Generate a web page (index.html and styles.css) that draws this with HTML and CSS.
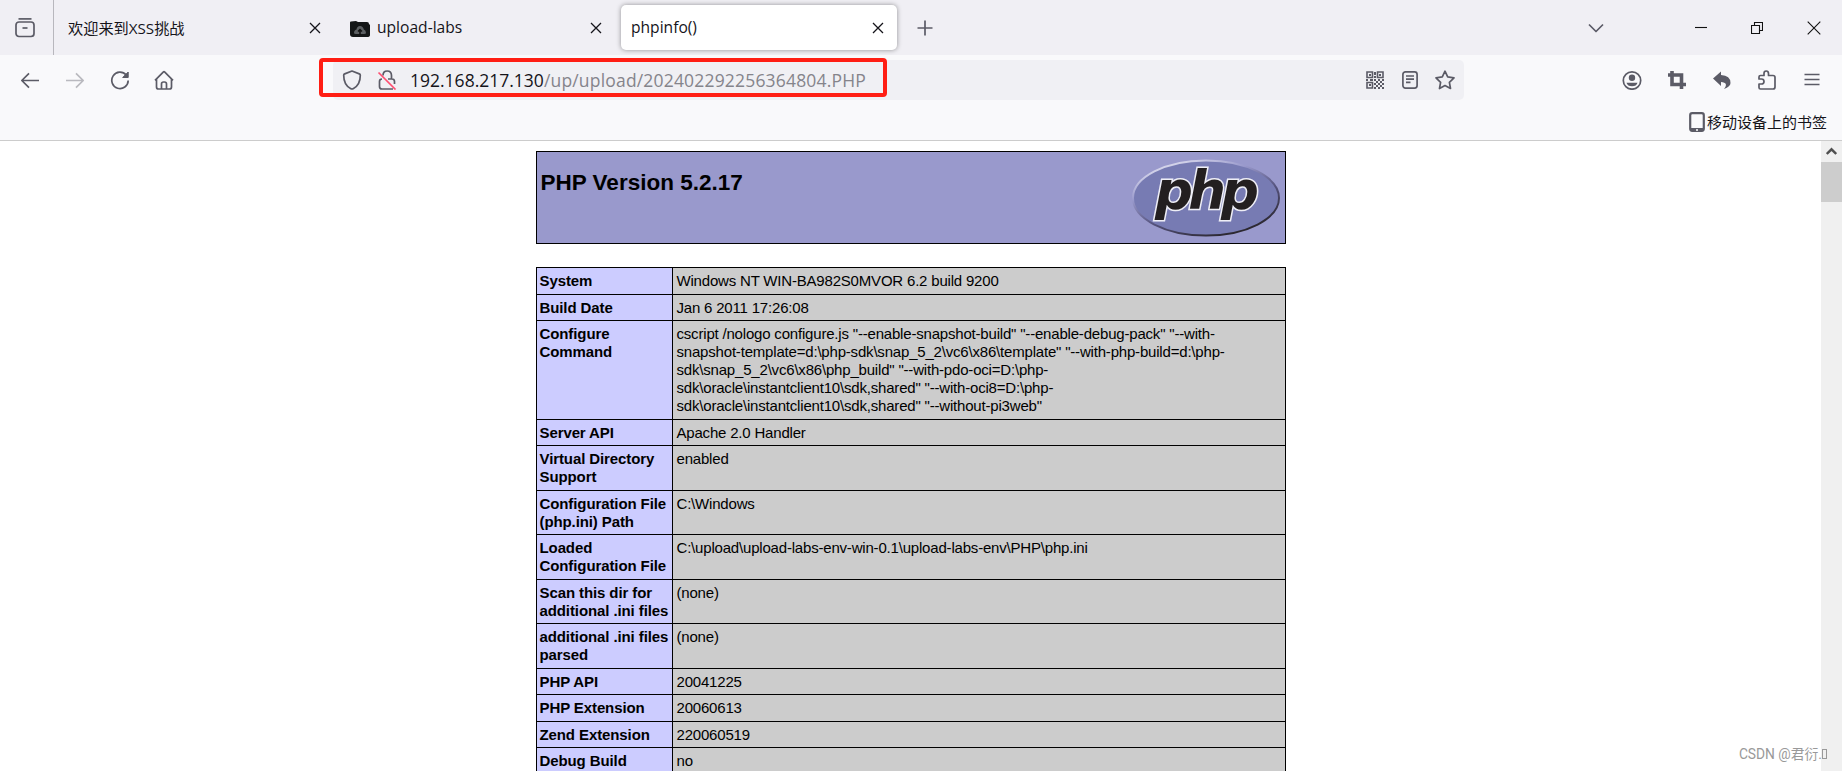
FILE: index.html
```
<!DOCTYPE html>
<html lang="zh">
    <head>
        <meta charset="utf-8">
        <title>phpinfo()</title>
        <link rel="stylesheet" href="styles.css">
    </head>
    <body>
        <div class="tabbar">
            <div class="recent">
                <svg class="icon" width="22" height="22" viewBox="0 0 22 22"><path d="M4.500 1.900h13"/><rect x="2" y="5" width="18" height="14.500" rx="3"/><path d="M8.500 11h5"/></svg>
            </div>
            <div class="tab">
                <span class="tab-title cjk">欢迎来到XSS挑战</span>
                <svg class="close" width="12" height="12" viewBox="0 0 12 12"><path d="M1 1l10 10M11 1L1 11"/></svg>
            </div>
            <div class="tab tab-labs">
                <svg class="favicon" width="20" height="18" viewBox="0 0 20 18"><path d="M0 5V2.500Q0 1.500 1 1.500L6 1l2 1h9q2 0 2 2l1 1v10q0 2-3 2H3q-3 0-3-3z" fill="#141617"/><path d="M4 13q0-3 2.500-3.500Q7 6 10 6t3.800 3.500Q16 10 16 13q0 1-2 1H6q-2 0-2-1z" fill="#5c5f62"/><path d="M10 10v5M8 11.500l2-2 2 2" stroke="#111" stroke-width="1.500" fill="none"/></svg>
                <span class="tab-title">upload-labs</span>
                <svg class="close" width="12" height="12" viewBox="0 0 12 12"><path d="M1 1l10 10M11 1L1 11"/></svg>
            </div>
            <div class="tab active">
                <span class="tab-title">phpinfo()</span>
                <svg class="close" width="12" height="12" viewBox="0 0 12 12"><path d="M1 1l10 10M11 1L1 11"/></svg>
            </div>
            <svg class="icon newtab" width="16" height="16" viewBox="0 0 16 16"><path d="M8 .5v15M.5 8h15"/></svg>
            <div class="window-buttons">
                <svg class="icon" width="16" height="10" viewBox="0 0 16 10"><path d="M1 1.500l7 7 7-7"/></svg>
                <svg class="win min" width="12" height="12" viewBox="0 0 12 12"><path d="M0 5.500h12"/></svg>
                <svg class="win" width="12" height="12" viewBox="0 0 12 12"><path d="M.5 3.500h8v8h-8zM3.500 3.500v-3h8v8h-3"/></svg>
                <svg class="win" width="14" height="14" viewBox="0 0 14 14"><path d="M.7 .7l12.600 12.600M13.300 .7L.7 13.300"/></svg>
            </div>
        </div>
        <div class="toolbar">
            <div class="nav">
                <svg class="icon" width="20" height="20" viewBox="0 0 20 20"><path d="M19 10.500H2M9 3.300L1.800 10.500 9 17.700"/></svg>
                <svg class="icon disabled" width="20" height="20" viewBox="0 0 20 20"><path d="M1 10.500h17M11 3.300l7.200 7.200-7.200 7.200"/></svg>
                <svg class="icon" width="20" height="20" viewBox="0 0 20 20"><path d="M16.200 5A8.200 8.200 0 1 0 18.200 10.500"/><path class="solid" d="M18.200 2v5.500h-5.500z"/></svg>
                <svg class="icon home" width="20" height="20" viewBox="0 0 20 20"><path d="M1 10.300L9.200 2.100q.8-.8 1.600 0L19 10.300M2.500 9V17q0 2 2 2h11q2 0 2-2V9M7.500 19v-5q0-2 2-2h1q2 0 2 2v5"/></svg>
            </div>
            <div class="urlbar">
                <svg class="icon" width="20" height="20" viewBox="0 0 20 20"><path d="M10 1l7.300 2.900q1 .4 1 1.400 0 9.500-6.800 13.300-1.500.8-3 0Q1.700 14.800 1.700 5.300q0-1 1-1.400z"/></svg>
                <svg class="icon lock" width="20" height="20" viewBox="0 0 20 20"><path d="M6 5.500Q6 1 10.200 1t4.300 4.500V9M11 9h4q2.500 0 2.500 2.500V14M5 9q-2.500 0-2.500 2.500v5Q2.500 19 5 19h11"/><path class="slash" d="M1.500 2.500l17 17"/></svg>
                <span class="url">192.168.217.130<span class="path">/up/upload/202402292256364804.PHP</span></span>
                <div class="url-actions">
                    <svg class="qr" width="18" height="18" viewBox="0 0 18 18"><path d="M1 1h5.500v5.500H1zM11.500 1H17v5.500h-5.500zM1 11.500h5.500V17H1z"/><path class="dots" d="M3 3h2v2H3zM13 3h2v2h-2zM3 13h2v2H3zM8 1h2v3H8zM8 5h2v2H8zM0 8h2v2H0zM4 8h3v2H4zM8 8h2v2H8zM12 8h2v2h-2zM16 8h2v2h-2zM10 10h2v2h-2zM14 10h2v2h-2zM8 12h2v2H8zM12 12h2v2h-2zM16 12h2v2h-2zM10 14h2v2h-2zM14 14h2v2h-2zM8 16h2v2H8zM12 16h2v2h-2zM16 16h2v2h-2z"/></svg>
                    <svg class="icon" width="18" height="20" viewBox="0 0 18 20"><rect x="1.900" y="1.900" width="14.200" height="16.200" rx="2.500"/><path d="M5 6h8M5 9.200h8M5 12.400h4.500"/></svg>
                    <svg class="icon" width="20" height="20" viewBox="0 0 20 20"><path d="M10 1.200l2.700 5.700 6.300.9-4.600 4.500 1.100 6.200-5.500-3-5.500 3 1.100-6.200L1 7.800l6.300-.9z"/></svg>
                </div>
                <div class="highlight"></div>
            </div>
            <div class="extensions">
                <svg class="icon" width="20" height="20" viewBox="0 0 20 20"><circle cx="10" cy="10.500" r="8.700"/><circle class="fill" cx="10" cy="7.800" r="3.200"/><path class="fill" d="M4.500 12.800h11q-1 3.500-5.500 3.500t-5.500-3.500z"/></svg>
                <svg class="icon" width="20" height="20" viewBox="0 0 20 20"><path class="thick" d="M5 1v13.500h14M1 5h13.500v14"/></svg>
                <svg class="icon" width="20" height="20" viewBox="0 0 20 20"><path class="fill" d="M9 1.500V5q9.500.5 9.500 8 0 3.500-6.500 6 5-6.500-3-7v4L1 8.500z"/></svg>
                <svg class="icon" width="20" height="20" viewBox="0 0 20 20"><path d="M2 9V7q0-1.500 1.500-1.500H7V3.500Q7 1 9.200 1t2.300 2.500v2H16q2 0 2 2V17q0 2-2 2H3.500Q2 19 2 17.500V14h2.500q2.500 0 2.500-2.500T4.500 9z"/></svg>
                <svg class="icon menu" width="16" height="14" viewBox="0 0 16 14"><path d="M.5 1.500h15M.5 6.500h15M.5 11.500h15"/></svg>
            </div>
        </div>
        <div class="bookmarks">
            <svg width="16" height="20" viewBox="0 0 16 20"><rect x="1.200" y="1.200" width="13.600" height="17.600" rx="2" fill="none" stroke="#5b5b66" stroke-width="2.200"/><path d="M1 16h14v3H1z" fill="#5b5b66"/><circle cx="8" cy="18" r="1" fill="#fff"/></svg>
            <span>移动设备上的书签</span>
        </div>
        <div class="page">
            <div class="content">
                <div class="header">
                    <h1>PHP Version 5.2.17</h1>
                    <svg class="logo" width="150" height="84" viewBox="0 0 150 84">
                        <defs>
                            <linearGradient id="rim" x1=".2" y1="0" x2=".8" y2="1">
                                <stop offset="0" stop-color="#e4e4f2"/>
                                <stop offset=".3" stop-color="#9999cc"/>
                                <stop offset=".6" stop-color="#54527c"/>
                                <stop offset="1" stop-color="#231f20"/>
                            </linearGradient>
                        </defs>
                        <ellipse cx="75" cy="42" rx="73" ry="37.500" fill="#777bb3" stroke="url(#rim)" stroke-width="2"/>
                        <text x="24" y="53" textLength="104">php</text>
                    </svg>
                </div>
                <table class="info">
                    <tr><th>System</th><td>Windows NT WIN-BA982S0MVOR 6.2 build 9200</td></tr>
                    <tr><th>Build Date</th><td>Jan 6 2011 17:26:08</td></tr>
                    <tr><th>Configure Command</th><td>cscript /nologo configure.js "--enable-snapshot-build" "--enable-debug-pack" "--with-<br>snapshot-template=d:\php-sdk\snap_5_2\vc6\x86\template" "--with-php-build=d:\php-<br>sdk\snap_5_2\vc6\x86\php_build" "--with-pdo-oci=D:\php-<br>sdk\oracle\instantclient10\sdk,shared" "--with-oci8=D:\php-<br>sdk\oracle\instantclient10\sdk,shared" "--without-pi3web"</td></tr>
                    <tr><th>Server API</th><td>Apache 2.0 Handler</td></tr>
                    <tr><th>Virtual Directory Support</th><td>enabled</td></tr>
                    <tr><th>Configuration File (php.ini) Path</th><td>C:\Windows</td></tr>
                    <tr><th>Loaded Configuration File</th><td>C:\upload\upload-labs-env-win-0.1\upload-labs-env\PHP\php.ini</td></tr>
                    <tr><th>Scan this dir for additional .ini files</th><td>(none)</td></tr>
                    <tr><th>additional .ini files parsed</th><td>(none)</td></tr>
                    <tr><th>PHP API</th><td>20041225</td></tr>
                    <tr><th>PHP Extension</th><td>20060613</td></tr>
                    <tr><th>Zend Extension</th><td>220060519</td></tr>
                    <tr><th>Debug Build</th><td>no</td></tr>
                </table>
            </div>
            <div class="scrollbar">
                <svg width="11" height="8" viewBox="0 0 11 8"><path d="M.8 7l4.700-4.700L10.200 7"/></svg>
                <div class="thumb"></div>
            </div>
        </div>
        <div class="watermark">CSDN @君衍.<span class="box"></span></div>
    </body>
</html>
```
FILE: styles.css
```
*{
    box-sizing: border-box;
}
body{
    margin: 0;
    height: 771px;
    overflow: hidden;
    display: flex;
    flex-direction: column;
    background-color: #fff;
    font-family: "Open Sans", "Noto Sans CJK SC", sans-serif;
    color: #15141a;
}
svg{
    display: block;
    flex-shrink: 0;
}
.icon{
    fill: none;
    stroke: #5b5b66;
    stroke-width: 1.7;
    stroke-linejoin: round;
}
.icon .fill{fill: #5b5b66; stroke: none;}
.icon .solid{fill: #5b5b66; stroke-width: 1;}
.icon .thick{stroke-width: 3.6; stroke-linejoin: miter;}
.disabled{opacity: 0.4;}

/* tabs */
.tabbar{
    height: 55px;
    flex-shrink: 0;
    display: flex;
    align-items: center;
    background-color: #f0eff4;
}
.recent{
    width: 54px;
    height: 55px;
    padding: 17px 0 0 14px;
    border-right: 1px solid #b8b7bd;
}
.tab{
    width: 281px;
    height: 45px;
    padding: 0 14px;
    display: flex;
    align-items: center;
}
.tab-title{
    margin-bottom: 1px;
    font-size: 15.6px;
}
.cjk{font-size: 15.2px;}
.close{
    margin-left: auto;
    fill: none;
    stroke: #15141a;
    stroke-width: 1.3;
}
.tab-labs{padding-left: 15px;}
.favicon{
    margin: 3px 7px 0 0;
}
.active{
    width: 276px;
    margin-left: 5px;
    padding: 0 13px 0 10px;
    background-color: #fff;
    border-radius: 5px;
    box-shadow: 0 0 5px rgba(0,0,0,0.4);
}
.newtab{
    margin-left: 20px;
}
.window-buttons{
    margin-left: auto;
    padding-right: 21px;
    display: flex;
    align-items: center;
}
.win{
    margin-left: 44px;
    fill: none;
    stroke: #111;
    stroke-width: 1.1;
}
.min{margin-left: 91px;}

/* toolbar */
.toolbar{
    height: 50px;
    flex-shrink: 0;
    padding-top: 5px;
    display: flex;
    background-color: #f9f9fb;
}
.nav{
    width: 333px;
    padding: 10px 0 0 20px;
    display: flex;
    gap: 25px;
}
.home{margin-left: -1px;}
.urlbar{
    position: relative;
    width: 1131px;
    height: 40px;
    padding: 0 9px;
    display: flex;
    align-items: center;
    border-radius: 5px;
    background-color: #f0f0f4;
}
.lock{margin-left: 15px;}
.slash{stroke: #ff4f70;}
.url{
    margin-left: 13px;
    font-size: 17.5px;
    white-space: nowrap;
}
.path{
    letter-spacing: 0.18px;
    color: #85848b;
}
.url-actions{
    margin-left: auto;
    display: flex;
    align-items: center;
    gap: 16.5px;
}
.qr{fill: none; stroke: #5b5b66; stroke-width: 1.6;}
.qr .dots{fill: #5b5b66; stroke: none;}
.highlight{
    position: absolute;
    left: -14px;
    top: -2px;
    width: 568px;
    height: 39px;
    border: 4px solid #ff1e14;
    border-radius: 4px;
}
.extensions{
    margin-left: auto;
    padding: 0 22px 0 0;
    height: 40px;
    display: flex;
    align-items: center;
    gap: 25px;
}
.menu{margin-left: 2px;}
.bookmarks{
    height: 36px;
    flex-shrink: 0;
    padding: 0 15px 2px 0;
    display: flex;
    align-items: center;
    justify-content: flex-end;
    gap: 2px;
    font-size: 15px;
    background-color: #f9f9fb;
    border-bottom: 1px solid #ccc;
}

/* phpinfo page */
.page{
    flex: 1;
    min-height: 0;
    display: flex;
    font-family: "Liberation Sans", Arial, sans-serif;
    font-size: 15px;
    line-height: 18px;
    color: #000;
}
.content{
    flex: 1;
    padding-top: 10px;
    display: flex;
    flex-direction: column;
    align-items: center;
}
.header{
    width: 750px;
    height: 93px;
    flex-shrink: 0;
    padding: 0 4px;
    display: flex;
    justify-content: space-between;
    border: 1px solid #000;
    background-color: #9999cc;
}
h1{
    margin: 17px 0 0;
    font-size: 22.5px;
    line-height: 27px;
}
.logo{
    margin-top: 4px;
}
.logo text{
    font: italic bold 53px "DejaVu Sans", sans-serif;
    fill: #231f20;
    stroke: #eeeef6;
    stroke-width: 3;
    paint-order: stroke;
}
.info{
    width: 750px;
    margin-top: 23px;
    border-collapse: collapse;
    table-layout: fixed;
}
.info th, .info td{
    border: 1px solid #000;
    padding: 4px 3px 3.5px 4px;
    vertical-align: top;
    text-align: left;
}
.info th{
    width: 136px;
    padding: 4px 0 3.5px 3px;
    letter-spacing: -0.1px;
    background-color: #ccccff;
}
.info td{
    letter-spacing: -0.19px;
    background-color: #ccc;
}
.scrollbar{
    width: 21px;
    background-color: #f0f0f0;
}
.scrollbar svg{
    margin: 6px 0 7px 5px;
    fill: none;
    stroke: #505050;
    stroke-width: 2.4;
}
.thumb{
    height: 40px;
    background-color: #cdcdcd;
}
.watermark{
    position: absolute;
    right: 15px;
    bottom: 7px;
    font-family: Roboto, "Noto Sans CJK SC", sans-serif;
    font-size: 13.8px;
    line-height: 20px;
    color: #999;
}
.box{
    display: inline-block;
    width: 5px;
    height: 10px;
    border: 1px solid #999;
}
```
